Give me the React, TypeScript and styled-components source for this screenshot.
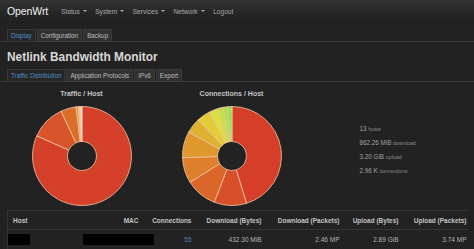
import React from "react";
import styled, { createGlobalStyle } from "styled-components";

const GlobalStyle = createGlobalStyle`
  html, body {
    margin: 0;
    padding: 0;
    background: #222;
    font-family: "Liberation Sans", Arial, sans-serif;
    color: #bbb;
    overflow: hidden;
  }
`;

const Page = styled.div`
  width: 474px;
  height: 249px;
  overflow: hidden;
  background: #222;
`;

const TopBar = styled.div`
  height: 22px;
  display: flex;
  align-items: center;
  padding: 0 7px;
  background: linear-gradient(#343434, #232323 70%, #222);
  border-bottom: 1px solid #1c1c1c;
`;

const Brand = styled.div`
  font-size: 10.5px;
  color: #f2f2f2;
  width: 54px;
  letter-spacing: -0.1px;
`;

const Menu = styled.div`
  display: flex;
  gap: 8.5px;
  font-size: 6.6px;
  color: #a8a8a8;
`;

const MenuItem = styled.span<{ $caret?: boolean }>`
  display: inline-flex;
  align-items: center;
  &::after {
    content: "";
    display: ${(p) => (p.$caret ? "inline-block" : "none")};
    margin-left: 3px;
    border-left: 2px solid transparent;
    border-right: 2px solid transparent;
    border-top: 2px solid #a8a8a8;
  }
`;

const TabRow = styled.div<{ $top: number }>`
  display: flex;
  gap: 1px;
  margin-top: ${(p) => p.$top}px;
  padding: 0 7px;
  border-bottom: 1px solid #3a3a3a;
  height: 12px;
`;

const Tab = styled.div<{ $active?: boolean }>`
  display: flex;
  align-items: center;
  padding: 0 3px;
  font-size: 6.3px;
  color: ${(p) => (p.$active ? "#4e8fc4" : "#bdbdbd")};
  background: ${(p) => (p.$active ? "#262626" : "#313131")};
  border: 1px solid #3a3a3a;
  border-bottom: none;
  border-radius: 1px 1px 0 0;
`;

const Title = styled.h1`
  margin: 8px 0 0 7px;
  font-size: 11.9px;
  line-height: 14px;
  font-weight: bold;
  color: #d8d8d8;
`;

const ChartArea = styled.div`
  display: flex;
  margin-top: 7px;
  padding-left: 6.5px;
  height: 118px;
`;

const ChartBlock = styled.div`
  width: 150px;
  display: flex;
  flex-direction: column;
  align-items: center;
`;

const ChartTitle = styled.div`
  font-size: 7px;
  font-weight: bold;
  color: #c4c4c4;
  line-height: 9px;
  margin-bottom: 7px;
`;

const Stats = styled.div`
  display: flex;
  flex-direction: column;
  padding: 33px 0 0 53px;
`;

const StatLine = styled.div`
  line-height: 14px;
  font-size: 6.3px;
  color: #a0a0a0;
  small {
    font-size: 5.3px;
    color: #8a8a8a;
  }
`;

const Table = styled.table`
  margin: 3px 0 0 7px;
  width: 460px;
  table-layout: fixed;
  border-collapse: collapse;
  border-left: 1px solid #333;
  font-size: 6.5px;
`;

const Th = styled.th<{ $left?: boolean }>`
  text-align: ${(p) => (p.$left ? "left" : "right")};
  font-weight: bold;
  color: #c2c2c2;
  height: 18px;
  padding: 0 1px 0 5px;
  border-top: 1px solid #353535;
  border-bottom: 1px solid #353535;
  white-space: nowrap;
  overflow: visible;
`;

const Td = styled.td<{ $left?: boolean; $link?: boolean }>`
  text-align: ${(p) => (p.$left ? "left" : "right")};
  color: ${(p) => (p.$link ? "#4a86b8" : "#b4b4b4")};
  height: 19px;
  padding: 0 1px 0 0;
  white-space: nowrap;
  overflow: visible;
`;

const Redacted = styled.span<{ $w: number; $shift?: number }>`
  display: inline-block;
  position: relative;
  left: ${(p) => p.$shift ?? 0}px;
  width: ${(p) => p.$w}px;
  height: 11px;
  background: #000;
  vertical-align: middle;
`;

type Slice = { v: number; c: string };

const pt = (cx: number, cy: number, r: number, a: number) => {
  const t = (a * Math.PI) / 180;
  return [cx + r * Math.sin(t), cy - r * Math.cos(t)];
};

function Donut({ slices }: { slices: Slice[] }) {
  const cx = 51;
  const cy = 51;
  const R = 49.5;
  const r = 14.5;
  let a = 0;
  return (
    <svg width="102" height="102" viewBox="0 0 102 102">
      {slices.map((s, i) => {
        const a0 = a;
        const a1 = a + s.v;
        a = a1;
        const large = s.v > 180 ? 1 : 0;
        const [x0, y0] = pt(cx, cy, R, a0);
        const [x1, y1] = pt(cx, cy, R, a1);
        const [x2, y2] = pt(cx, cy, r, a1);
        const [x3, y3] = pt(cx, cy, r, a0);
        const d = `M${x0} ${y0} A${R} ${R} 0 ${large} 1 ${x1} ${y1} L${x2} ${y2} A${r} ${r} 0 ${large} 0 ${x3} ${y3} Z`;
        return (
          <path key={i} d={d} fill={s.c} stroke="#f0c6a4" strokeWidth="0.8" />
        );
      })}
    </svg>
  );
}

const traffic: Slice[] = [
  { v: 294, c: "#d5402b" },
  { v: 41, c: "#d8542b" },
  { v: 18, c: "#d96f2b" },
  { v: 3, c: "#e6973a" },
  { v: 2, c: "#f2c597" },
  { v: 2, c: "#fbf1e4" },
];

const connections: Slice[] = [
  { v: 163, c: "#d53f2a" },
  { v: 38, c: "#d8502a" },
  { v: 37, c: "#db662a" },
  { v: 30, c: "#de7f2b" },
  { v: 31, c: "#df982d" },
  { v: 18, c: "#dfb131" },
  { v: 16, c: "#e4cc37" },
  { v: 10, c: "#dcdf3d" },
  { v: 7, c: "#c2e143" },
  { v: 5, c: "#a8e447" },
  { v: 5, c: "#8ee64c" },
];

const colWidths = [66, 66, 53, 70, 78, 59, 68];

export default function App() {
  return (
    <Page>
      <GlobalStyle />
      <TopBar>
        <Brand>OpenWrt</Brand>
        <Menu>
          <MenuItem $caret>Status</MenuItem>
          <MenuItem $caret>System</MenuItem>
          <MenuItem $caret>Services</MenuItem>
          <MenuItem $caret>Network</MenuItem>
          <MenuItem>Logout</MenuItem>
        </Menu>
      </TopBar>

      <TabRow $top={6}>
        <Tab $active>Display</Tab>
        <Tab>Configuration</Tab>
        <Tab>Backup</Tab>
      </TabRow>

      <Title>Netlink Bandwidth Monitor</Title>

      <TabRow $top={5}>
        <Tab $active>Traffic Distribution</Tab>
        <Tab>Application Protocols</Tab>
        <Tab>IPv6</Tab>
        <Tab>Export</Tab>
      </TabRow>

      <ChartArea>
        <ChartBlock>
          <ChartTitle>Traffic / Host</ChartTitle>
          <Donut slices={traffic} />
        </ChartBlock>
        <ChartBlock>
          <ChartTitle>Connections / Host</ChartTitle>
          <Donut slices={connections} />
        </ChartBlock>
        <Stats>
          <StatLine>
            13 <small>hosts</small>
          </StatLine>
          <StatLine>
            862.26 MiB <small>download</small>
          </StatLine>
          <StatLine>
            3.20 GiB <small>upload</small>
          </StatLine>
          <StatLine>
            2.96 K <small>connections</small>
          </StatLine>
        </Stats>
      </ChartArea>

      <Table>
        <colgroup>
          {colWidths.map((w, i) => (
            <col key={i} style={{ width: w }} />
          ))}
        </colgroup>
        <thead>
          <tr>
            <Th $left>Host</Th>
            <Th>MAC</Th>
            <Th>Connections</Th>
            <Th>Download (Bytes)</Th>
            <Th>Download (Packets)</Th>
            <Th>Upload (Bytes)</Th>
            <Th>Upload (Packets)</Th>
          </tr>
        </thead>
        <tbody>
          <tr>
            <Td $left>
              <Redacted $w={22} />
            </Td>
            <Td>
              <Redacted $w={71} $shift={9} />
            </Td>
            <Td $link>55</Td>
            <Td>432.30 MiB</Td>
            <Td>2.46 MP</Td>
            <Td>2.89 GiB</Td>
            <Td>3.74 MP</Td>
          </tr>
        </tbody>
      </Table>
    </Page>
  );
}
